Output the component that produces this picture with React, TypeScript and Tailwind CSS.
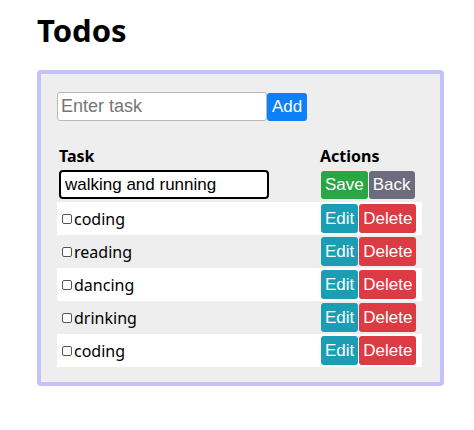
import React, { useState } from 'react';

interface Todo {
  id: number;
  task: string;
}

const initialTodos: Todo[] = [
  { id: 1, task: 'coding' },
  { id: 2, task: 'reading' },
  { id: 3, task: 'dancing' },
  { id: 4, task: 'drinking' },
  { id: 5, task: 'coding' },
];

const segoe = { fontFamily: '"Noto Sans", "Open Sans", sans-serif' };
const arial = { fontFamily: '"Liberation Sans", Arial, sans-serif' };

export default function App() {
  const [todos] = useState<Todo[]>(initialTodos);
  const [editText, setEditText] = useState('walking and running');

  return (
    <div className="min-h-[430px] bg-white pl-[37px] pt-[8px] text-black" style={segoe}>
      <h1 className="text-[31px] font-bold leading-[44px] mb-[18px]">Todos</h1>

      <div className="w-[407px] rounded-[4px] border-[4px] border-[#c3c3fa] bg-[#eeeeee] pl-[16px] pr-[17px] pt-[18px] pb-[15px]">
        <div className="flex items-center">
          <input
            placeholder="Enter task"
            className="h-[29px] w-[210px] rounded-[3px] border border-[#b8b8b8] bg-white px-[3px] text-[18px] placeholder:text-[#767676] outline-none"
            style={arial}
          />
          <button className="h-[28px] rounded-[3px] bg-[#0d7ff7] px-[5px] text-[17px] text-white" style={arial}>
            Add
          </button>
        </div>

        <table className="mt-[24px] w-[365px] border-collapse">
          <thead>
            <tr className="h-[24px]">
              <th className="w-[262px] pl-[2px] text-left text-[16px] font-bold leading-[22px] align-top">Task</th>
              <th className="pl-[1px] text-left text-[16px] font-bold leading-[22px] align-top">Actions</th>
            </tr>
          </thead>
          <tbody>
            <tr className="h-[33px]">
              <td className="pl-[2px] align-top pt-[1px]">
                <input
                  value={editText}
                  onChange={(e) => setEditText(e.target.value)}
                  className="h-[29px] w-[210px] rounded-[4px] border-2 border-black bg-white px-[4px] text-[17px] outline-none"
                  style={arial}
                />
              </td>
              <td className="pl-[2px] align-top pt-[2px]">
                <div className="flex gap-[1px]" style={arial}>
                  <button className="h-[28px] rounded-[3px] bg-[#2aa745] px-[4px] text-[17px] text-white">Save</button>
                  <button className="h-[28px] rounded-[3px] bg-[#6c6c7e] px-[4px] text-[17px] text-white">Back</button>
                </div>
              </td>
            </tr>
            {todos.map((todo, i) => (
              <tr key={todo.id} className={i % 2 === 0 ? 'bg-white' : 'bg-[#eeeeee]'}>
                <td className="h-[33px] pl-[5px]">
                  <label className="flex items-center gap-[2px] text-[16px]">
                    <span className="inline-block h-[10px] w-[10px] rounded-[2px] border border-[#555] bg-white" />
                    {todo.task}
                  </label>
                </td>
                <td className="h-[33px] pl-[2px]">
                  <div className="flex gap-[1px]" style={arial}>
                    <button className="h-[29px] rounded-[3px] bg-[#1b9db3] px-[4px] text-[17px] text-white">Edit</button>
                    <button className="h-[29px] rounded-[3px] bg-[#dc3b43] px-[4px] text-[17px] text-white">Delete</button>
                  </div>
                </td>
              </tr>
            ))}
          </tbody>
        </table>
      </div>
    </div>
  );
}
